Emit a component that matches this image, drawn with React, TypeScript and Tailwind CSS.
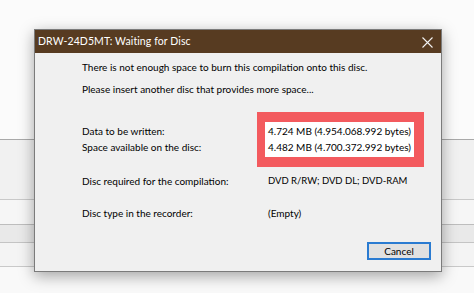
import React from "react";

const font = { fontFamily: 'Lato, "Noto Sans", sans-serif' };

export default function App() {
    return (
        <div className="relative w-[474px] h-[293px] overflow-hidden bg-white" style={font}>
            {/* desktop behind the dialog */}
            <div className="flex flex-col h-full">
                <div className="h-[139px] bg-[#fbfbfb]"></div>
                <div className="h-[60px] border-t border-[#a9a9a9] bg-[#f1f1f1]"></div>
                <div className="h-[25px] border-t border-[#c9c9c9] bg-[#f6f6f6]"></div>
                <div className="h-[18px] border-t border-[#bdbdbd] bg-[#e9e9e9]"></div>
                <div className="h-[24px] border-t border-[#c4c4c4] bg-[#f4f4f4]"></div>
                <div className="flex-1 border-t border-[#c9c9c9] bg-[#f9f9f9]"></div>
            </div>

            {/* dialog window */}
            <div className="absolute left-[34px] top-[29px] w-[408px] h-[243px] border border-[#7b7b7b] bg-[#f0f0f0] shadow-[0_4px_14px_rgba(0,0,0,0.35)] flex flex-col">
                <div className="h-[23px] bg-[#573b21] flex items-center justify-between pl-[3px] pr-[8px]">
                    <span className="text-white text-[10.5px] tracking-[0.1px] leading-none">DRW-24D5MT: Waiting for Disc</span>
                    <svg width="11" height="11" viewBox="0 0 11 11" className="mt-[1px]">
                        <path d="M0.5 0.5 L10.5 10.5 M10.5 0.5 L0.5 10.5" stroke="#f2f2f2" strokeWidth="1.1" />
                    </svg>
                </div>

                <div className="flex flex-col pl-[47px] text-[10px] leading-[16px] text-black">
                    <div className="mt-[6px]">There is not enough space to burn this compilation onto this disc.</div>
                    <div className="mt-[6px]">Please insert another disc that provides more space...</div>

                    <div className="mt-[26px] flex">
                        <div className="w-[186px] flex flex-col">
                            <div>Data to be written:</div>
                            <div>Space available on the disc:</div>
                        </div>
                        <div className="-ml-[11px] -mt-[11px] -mb-[12px] border-l-[8px] border-r-[10px] border-y-[10px] border-[#f35a5e] bg-[#f35a5e]">
                            <div className="bg-white pl-[3px] pr-[3px] pt-[1px] pb-[2px] flex flex-col">
                                <div>4.724 MB (4.954.068.992 bytes)</div>
                                <div>4.482 MB (4.700.372.992 bytes)</div>
                            </div>
                        </div>
                    </div>

                    <div className="mt-[18px] flex">
                        <div className="w-[186px]">Disc required for the compilation:</div>
                        <div className="text-[9.5px]">DVD R/RW; DVD DL; DVD-RAM</div>
                    </div>

                    <div className="mt-[16px] flex">
                        <div className="w-[186px]">Disc type in the recorder:</div>
                        <div>(Empty)</div>
                    </div>

                    <div className="mt-[21px] flex justify-end pr-[10px]">
                        <button className="w-[64px] h-[18px] border-2 border-[#2a7bd1] bg-[#e1e1e1] text-[10px] leading-none text-black">
                            Cancel
                        </button>
                    </div>
                </div>
            </div>
        </div>
    );
}
